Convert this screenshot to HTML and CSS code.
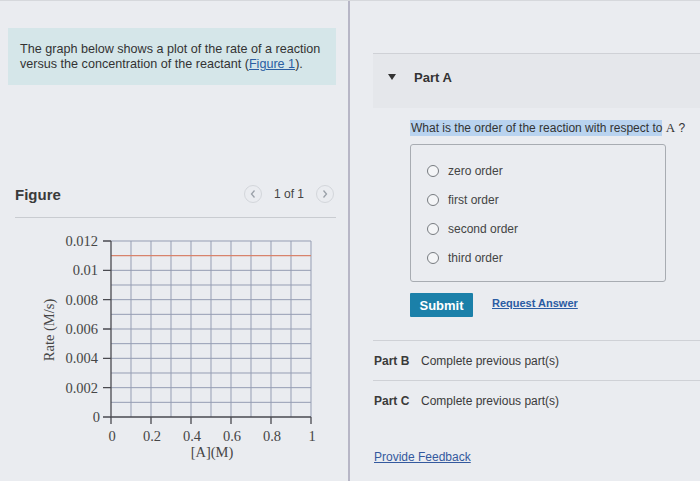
FILE: index.html
```html
<!DOCTYPE html>
<html>
<head>
<meta charset="utf-8">
<link rel="stylesheet" href="styles.css">
</head>
<body>
<div class="page">
  <div class="left">
    <div class="intro"><span class="intro-line">The graph below shows a plot of the rate of a reaction</span><span class="intro-line">versus the concentration of the reactant (<a class="fig-link">Figure 1</a>).</span></div>
    <div class="fig-head">
      <span class="fig-title">Figure</span>
      <div class="fig-nav">
        <span class="nav-btn"><svg width="8" height="10" viewBox="0 0 8 10"><path d="M5.5 1.5 L2.5 5 L5.5 8.5" fill="none" stroke="#9aa0a8" stroke-width="1.3"/></svg></span>
        <span class="nav-count">1 of 1</span>
        <span class="nav-btn"><svg width="8" height="10" viewBox="0 0 8 10"><path d="M2.5 1.5 L5.5 5 L2.5 8.5" fill="none" stroke="#9aa0a8" stroke-width="1.3"/></svg></span>
      </div>
    </div>
    <svg class="chart" width="345" height="240" viewBox="0 0 345 240">
      <g stroke="#959db3" stroke-width="1" fill="none">
        <path d="M131 16V192M151 16V192M171 16V192M191 16V192M211 16V192M231 16V192M251 16V192M271 16V192M291 16V192M311 16V192"/>
        <path d="M111 16H311M111 45.33H311M111 60H311M111 74.67H311M111 89.33H311M111 104H311M111 118.67H311M111 133.33H311M111 148H311M111 162.67H311M111 177.33H311"/>
      </g>
      <path d="M111 30.67H311" stroke="#d8836c" stroke-width="1.2"/>
      <g stroke="#4a4a50" stroke-width="1.3" fill="none">
        <path d="M111 16V192H311"/>
        <path d="M103 16H111M103 45.33H111M103 74.67H111M103 104H111M103 133.33H111M103 162.67H111M103 192H111"/>
        <path d="M111 192V199M151 192V199M191 192V199M231 192V199M271 192V199M311 192V199"/>
      </g>
      <g class="ax" text-anchor="end">
        <text x="98" y="21">0.012</text>
        <text x="98" y="50.3">0.01</text>
        <text x="98" y="79.7">0.008</text>
        <text x="98" y="109">0.006</text>
        <text x="98" y="138.3">0.004</text>
        <text x="98" y="167.7">0.002</text>
        <text x="100" y="197">0</text>
      </g>
      <g class="ax" text-anchor="middle">
        <text x="112" y="216">0</text>
        <text x="152" y="216">0.2</text>
        <text x="192" y="216">0.4</text>
        <text x="232" y="216">0.6</text>
        <text x="272" y="216">0.8</text>
        <text x="312" y="216">1</text>
        <text x="212" y="232">[A](M)</text>
        <text x="0" y="0" transform="translate(54 105) rotate(-90)">Rate (M/s)</text>
      </g>
    </svg>
  </div>
  <div class="right">
    <div class="part-head">
      <svg class="caret" width="8" height="6" viewBox="0 0 8 6"><path d="M0 0H8L4 6Z" fill="#333"/></svg>
      <span class="part-title">Part A</span>
    </div>
    <div class="part-body">
      <div class="question"><span class="hl">What is the order of the reaction with respect to</span> <span class="math">A</span> ?</div>
      <div class="options">
        <label class="opt"><span class="radio"></span>zero order</label>
        <label class="opt"><span class="radio"></span>first order</label>
        <label class="opt"><span class="radio"></span>second order</label>
        <label class="opt"><span class="radio"></span>third order</label>
      </div>
      <div class="actions">
        <span class="submit">Submit</span>
        <a class="request">Request Answer</a>
      </div>
    </div>
    <div class="part-row first"><span class="pr-label">Part B</span><span class="pr-text">Complete previous part(s)</span></div>
    <div class="part-row"><span class="pr-label">Part C</span><span class="pr-text">Complete previous part(s)</span></div>
    <a class="feedback">Provide Feedback</a>
  </div>
</div>
</body>
</html>
```

FILE: styles.css
```css
html, body {
  margin: 0;
  padding: 0;
}
body {
  width: 700px;
  height: 481px;
  overflow: hidden;
  background: #eaecf0;
  font-family: "Liberation Sans", Arial, sans-serif;
  color: #353535;
}
.page {
  display: flex;
  height: 480px;
  border-top: 1px solid #d6d8dc;
}
.left {
  width: 350px;
  flex: none;
  border-right: 2px solid #b7b6c6;
  box-sizing: border-box;
}
.intro {
  margin: 27px 0 0 8px;
  width: 328px;
  height: 57px;
  box-sizing: border-box;
  background: #d5e6e9;
  padding: 14px 12px 0 12px;
  font-size: 12.6px;
  line-height: 15px;
  color: #333;
}
.intro-line {
  display: block;
  white-space: nowrap;
}
.fig-link {
  color: #2c5ea2;
  text-decoration: underline;
}
.fig-head {
  margin: 97px 12px 0 15px;
  height: 24px;
  padding-bottom: 11px;
  border-bottom: 1px solid #c9ccd1;
  display: flex;
  align-items: center;
  justify-content: space-between;
}
.fig-title {
  font-weight: bold;
  font-size: 15px;
  color: #3a3a3a;
}
.fig-nav {
  display: flex;
  align-items: center;
  gap: 9px;
  margin-right: 2px;
}
.nav-btn {
  width: 18px;
  height: 18px;
  border: 1px solid #d3d6db;
  border-radius: 50%;
  box-sizing: border-box;
  display: flex;
  align-items: center;
  justify-content: center;
}
.nav-count {
  font-size: 12px;
  color: #444;
  margin: 0 3px;
}
.chart {
  display: block;
  margin-top: 7px;
}
.ax {
  font-family: "Liberation Serif", "Times New Roman", serif;
  font-size: 14.5px;
  fill: #464646;
}
.right {
  flex: 1;
  padding-top: 52px;
}
.part-head {
  margin-left: 23px;
  height: 55px;
  box-sizing: border-box;
  background: #e5e7eb;
  border-top: 1px solid #cfd1d6;
  display: flex;
  align-items: center;
  padding: 0 0 8px 15px;
}
.caret {
  display: block;
}
.part-title {
  margin-left: 18px;
  font-weight: bold;
  font-size: 13px;
  color: #333;
}
.part-body {
  margin-left: 60px;
}
.question {
  margin-top: 12px;
  height: 16px;
  line-height: 16px;
  font-size: 12px;
  color: #333;
}
.hl {
  background: #b9d3ef;
  padding: 1px 0 1px 1px;
}
.math {
  font-family: "Liberation Serif", "Times New Roman", serif;
  font-size: 13px;
}
.options {
  margin-top: 8px;
  width: 256px;
  height: 138px;
  box-sizing: border-box;
  border: 1px solid #a8acb2;
  border-radius: 3px;
  padding: 11px 0 0 16px;
}
.opt {
  display: flex;
  align-items: center;
  height: 29px;
  font-size: 12px;
  color: #444;
}
.radio {
  width: 12px;
  height: 12px;
  box-sizing: border-box;
  border: 1.3px solid #777b80;
  border-radius: 50%;
  margin-right: 9px;
  background: #f4f5f7;
}
.actions {
  margin-top: 11px;
  display: flex;
  align-items: center;
}
.submit {
  width: 63px;
  height: 24px;
  display: flex;
  align-items: center;
  justify-content: center;
  background: #1b80a9;
  color: #fff;
  font-weight: bold;
  font-size: 13px;
  border-radius: 1px;
}
.request {
  margin-left: 19px;
  margin-top: -4px;
  font-size: 11px;
  font-weight: bold;
  color: #2b5ca3;
  text-decoration: underline;
}
.part-row {
  margin-left: 23px;
  height: 39px;
  border-top: 1px solid #cfd1d6;
  display: flex;
  align-items: center;
  font-size: 12px;
  color: #3a3a3a;
}
.part-row.first {
  margin-top: 23px;
}
.pr-label {
  width: 47px;
  margin-left: 1px;
  font-weight: bold;
}
.feedback {
  display: block;
  margin: 30px 0 0 24px;
  font-size: 12px;
  color: #34599e;
  text-decoration: underline;
}
```
